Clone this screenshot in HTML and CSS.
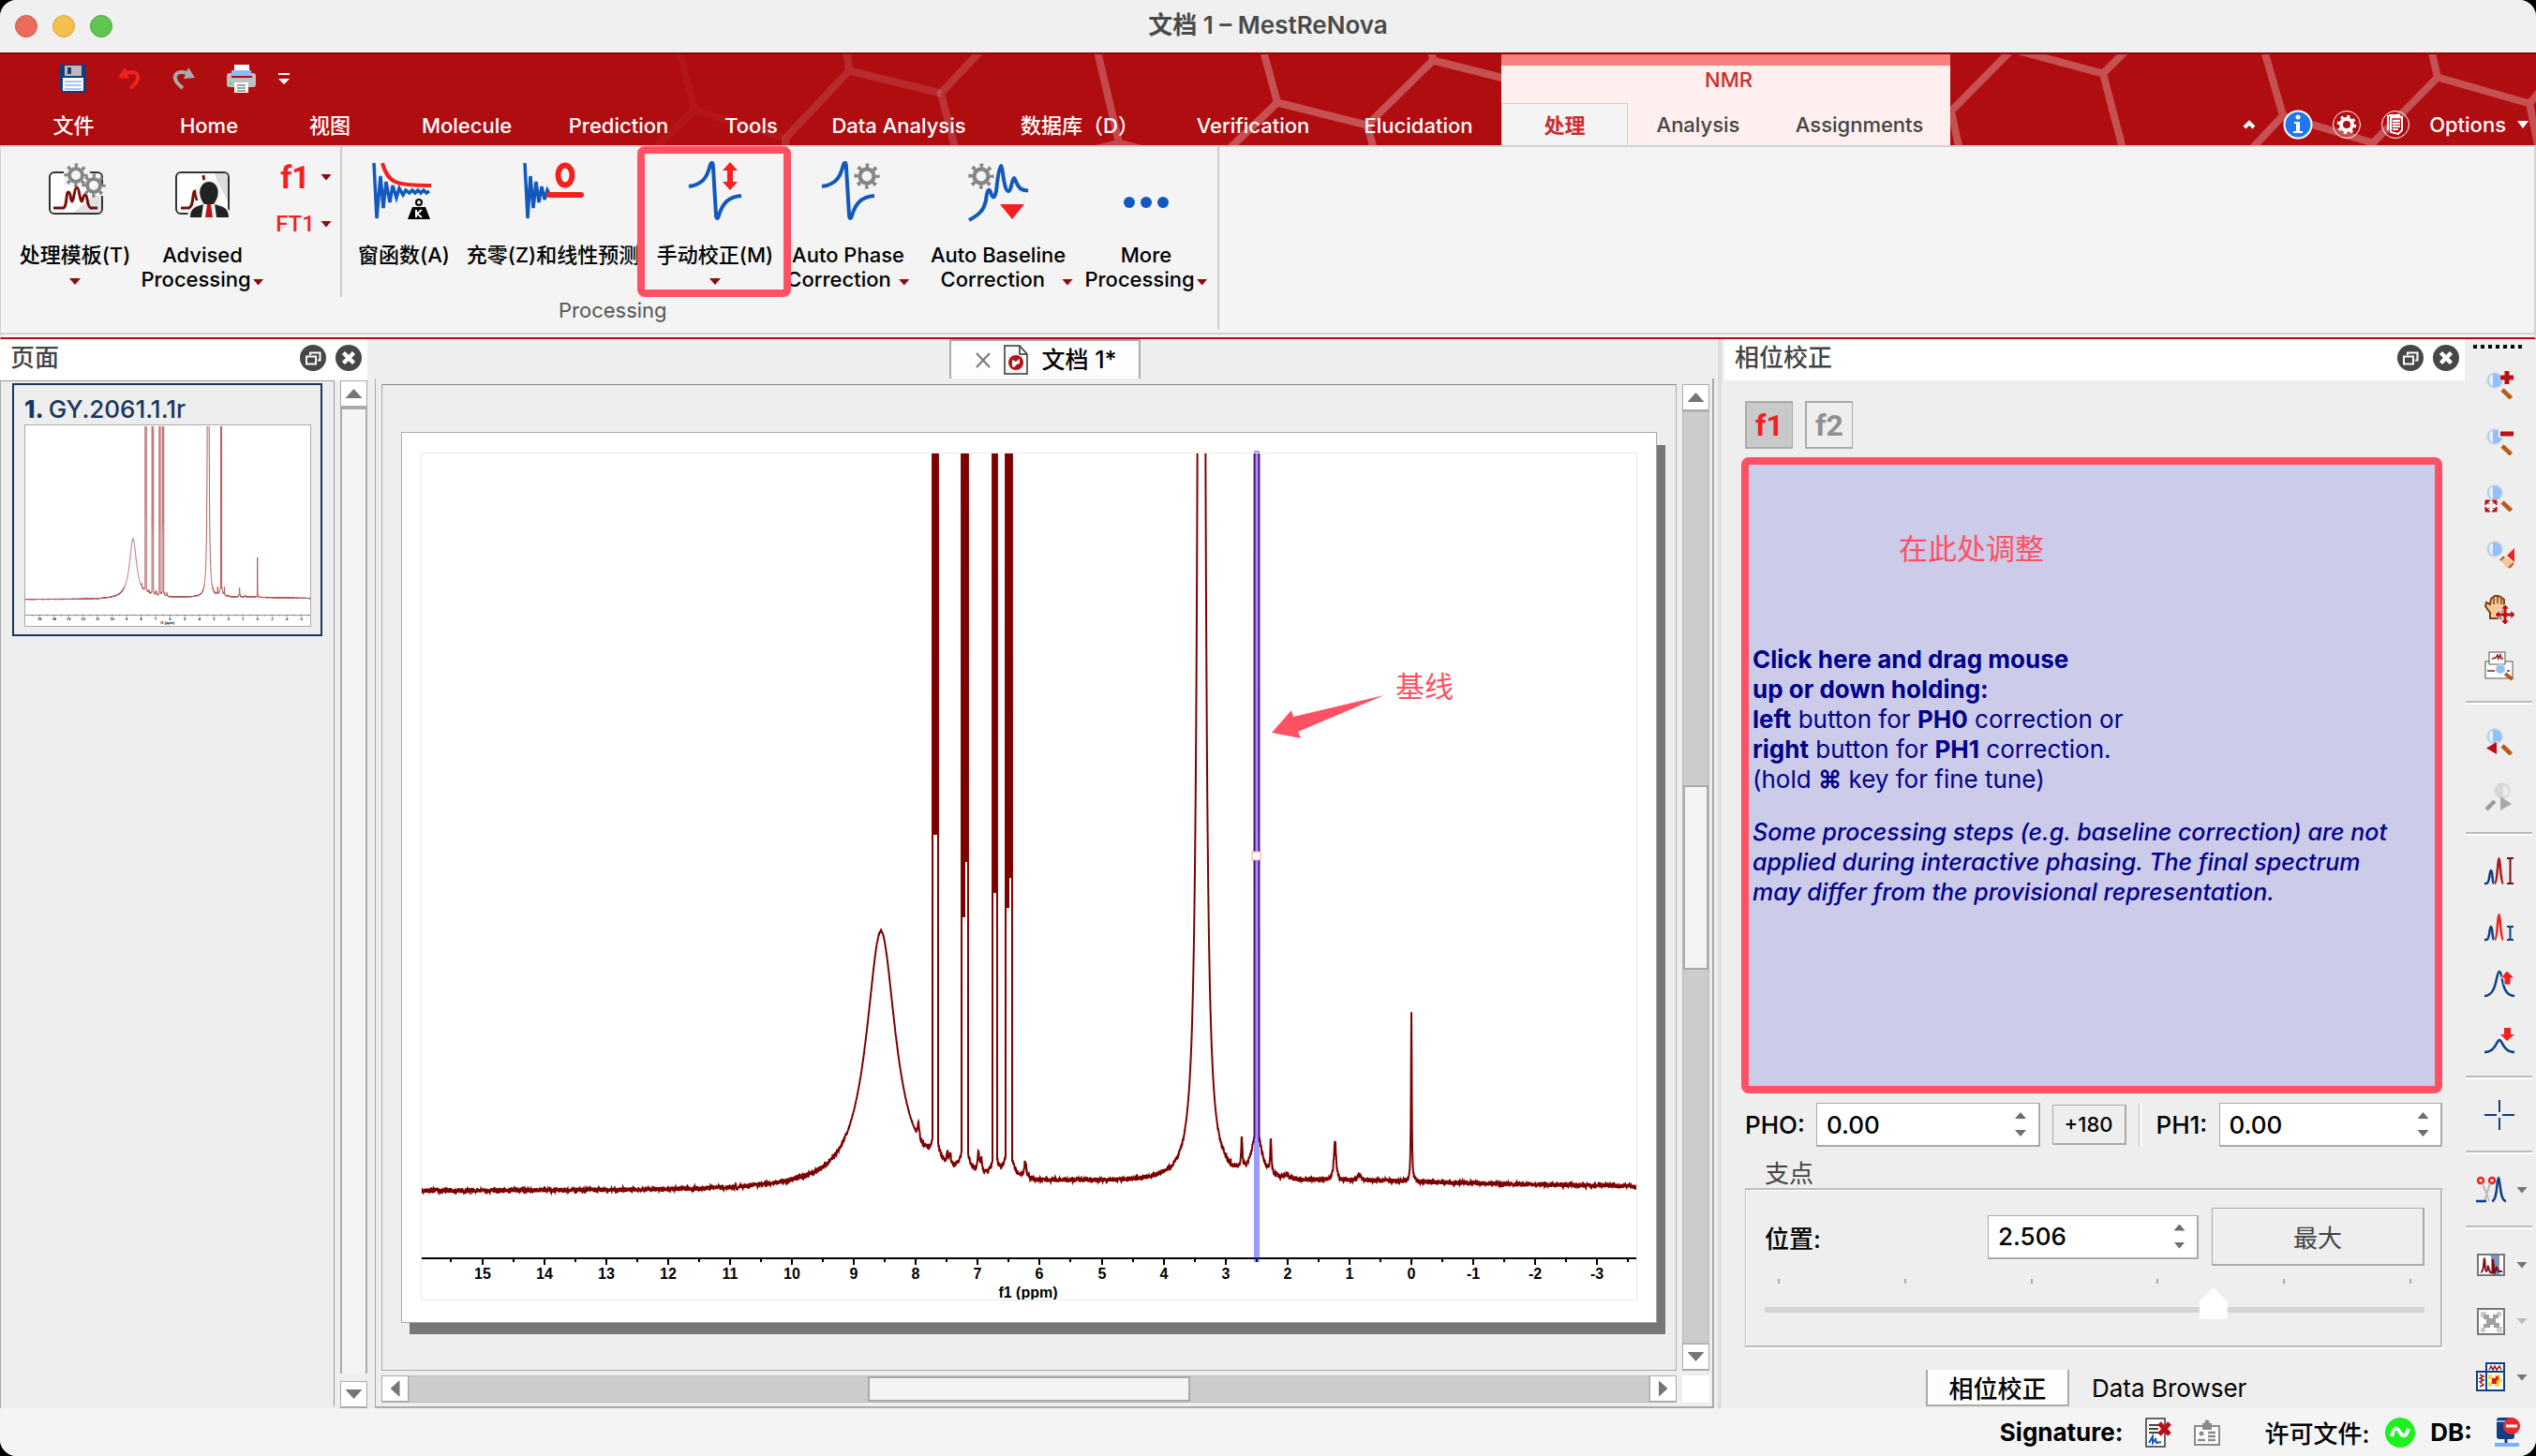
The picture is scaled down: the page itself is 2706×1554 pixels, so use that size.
FILE: index.html
```html
<!DOCTYPE html>
<html lang="zh-CN">
<head>
<meta charset="utf-8">
<title>文档 1 – MestReNova</title>
<link rel="stylesheet" href="styles.css">
</head>
<body>
<svg class="defs" aria-hidden="true">
  <symbol id="gear" viewBox="-13 -13 26 26"><circle r="7" fill="none" stroke="#858585" stroke-width="4"/><circle r="10.6" fill="none" stroke="#858585" stroke-width="4" stroke-dasharray="3.3 5.03" stroke-dashoffset="1.6"/></symbol>
  <symbol id="lens" viewBox="0 0 32 32"><circle cx="11" cy="12" r="9" fill="#d9dce0"/><circle cx="11" cy="12" r="7.6" fill="#93c0fb"/><path d="M9 5.5a7 7 0 0 0 0 13z" fill="#e6f0ff"/><path d="M19 22l9.5 9" stroke="#b85c14" stroke-width="4.5"/></symbol>
  <symbol id="phase" viewBox="0 0 64 64"><path d="M4 27C18 25 23 18 26 7c2-8 4-6 4 0l3 50c0 5 2 5 3 1C40 45 46 38 60 37" fill="none" stroke="#1259bd" stroke-width="4"/></symbol>
  <symbol id="restore" viewBox="0 0 28 28"><circle cx="14" cy="14" r="14" fill="#474747"/><path d="M11 11V8.500h10.500v8H19" fill="none" stroke="#fff" stroke-width="2"/><rect x="7" y="12.500" width="10" height="8" fill="#474747" stroke="#fff" stroke-width="2"/></symbol>
  <symbol id="close" viewBox="0 0 28 28"><circle cx="14" cy="14" r="14" fill="#474747"/><path d="M8.500 8.500l11 11M19.500 8.500l-11 11" stroke="#fff" stroke-width="4.500"/></symbol>
</svg>

<div class="titlebar">
  <div class="lights"><button class="light red" aria-label="Close"></button><button class="light yellow" aria-label="Minimize"></button><button class="light green" aria-label="Zoom"></button></div>
  <h1>文档 1 – MestReNova</h1>
</div>

<header class="header">
  <svg class="hex" viewBox="0 57 2706 98" preserveAspectRatio="xMaxYMid slice" aria-hidden="true">
    <g fill="none" stroke="#fff" stroke-width="8">
      <path opacity=".04" d="M726 57l15 60-40 38M741 117l97 30"/>
      <path opacity=".12" d="M903 50l3 25-68 72v14M906 75l98 24"/>
      <path opacity=".16" d="M1050 50l-46 49 16 62"/>
      <path opacity=".25" d="M1170 50l24 102-30 8M1194 152l30 8"/>
      <path opacity=".28" d="M1347 50l16 59-52 50M1363 109l96 24 8 30M1459 133l70-69-2-12M1529 64l80 20"/>
      <path opacity=".28" d="M2149 50l-67 68M2147 52l97 26 26-26M2244 78l22 84M2082 118l9 42M2415 50l21 73-34 36M2436 123l96 29 69-70-7-30M2601 82l98 28 12-14M2699 110l9 44M2532 152l1 8"/>
    </g>
  </svg>
  <div class="header-left">
    <div class="quick">
      <button aria-label="Save"><svg width="28" height="30"><path d="M0 0h28v30H4l-4-4z" fill="#0f3f7e"/><rect x="5" y="1" width="18" height="11" fill="#bbb"/><rect x="8" y="3" width="4" height="7" fill="#0f3f7e"/><rect x="3" y="14" width="22" height="14" fill="#fff"/><path d="M5 18h18M5 22h18M5 26h18" stroke="#8fb8ec" stroke-width="1.500"/></svg></button>
      <button aria-label="Undo"><svg width="24" height="24"><path d="M13 22C28 10 20 2 8 6" fill="none" stroke="#f3201f" stroke-width="4"/><path d="M0 11L7 0l5 12z" fill="#f3201f"/></svg></button>
      <button aria-label="Redo"><svg width="24" height="24"><path d="M11 22C-4 10 4 2 16 6" fill="none" stroke="#a9a9a9" stroke-width="4"/><path d="M24 11L17 0l-5 12z" fill="#a9a9a9"/></svg></button>
      <button aria-label="Print"><svg width="32" height="30"><rect x="8" y="0" width="16" height="8" fill="#fff"/><rect x="0" y="9" width="31" height="15" rx="3" fill="#bfbfbf"/><path d="M5 6h21v7H5z" fill="#90bdfa"/><path d="M5 13h22" stroke="#b00d10" stroke-width="2"/><rect x="8" y="19" width="15" height="11" fill="#fff"/><path d="M11 22h9M11 25h9M11 28h9" stroke="#444"/><circle cx="4" cy="20" r="1.500" fill="#3f3"/></svg></button>
      <button aria-label="Customize"><svg width="12" height="12"><path d="M0 1h12" stroke="#fff" stroke-width="2"/><path d="M0 6h12l-6 6z" fill="#fff"/></svg></button>
    </div>
    <nav class="tabs">
      <a href="#">文件</a><a href="#">Home</a><a href="#">视图</a><a href="#">Molecule</a><a href="#">Prediction</a><a href="#">Tools</a><a href="#">Data Analysis</a><a href="#">数据库（D）</a><a href="#">Verification</a><a href="#">Elucidation</a>
    </nav>
  </div>
  <div class="context">
    <div class="context-title">NMR</div>
    <nav class="context-tabs"><a href="#" class="active">处理</a><a href="#">Analysis</a><a href="#">Assignments</a></nav>
  </div>
  <div class="header-right">
    <button class="collapse" aria-label="Collapse"><svg width="14" height="10"><path d="M2 8l5-5 5 5" fill="none" stroke="#fff" stroke-width="4"/></svg></button>
    <button aria-label="Information"><svg width="32" height="32"><circle cx="16" cy="16" r="14.500" fill="#2077f0" stroke="#fff" stroke-width="2"/><circle cx="16" cy="8" r="2.500" fill="#fff"/><path d="M12 13h6v10h3v2H11v-2h3v-8h-2z" fill="#fff"/></svg></button>
    <button aria-label="Settings"><svg width="32" height="32"><circle cx="16" cy="16" r="14.500" fill="none" stroke="#fff"/><g fill="none" stroke="#fff"><circle cx="16" cy="16" r="6" stroke-width="4"/><circle cx="16" cy="16" r="8.500" stroke-width="3.500" stroke-dasharray="3 3.675"/></g></svg></button>
    <button aria-label="Report"><svg width="32" height="32"><circle cx="16" cy="16" r="14.500" fill="none" stroke="#fff"/><path d="M11 8h12v14l-4 4-8-2zM9 6h12M8 6v16" fill="none" stroke="#fff" stroke-width="2"/><path d="M13 12h8M13 15h8M13 18h8M13 21h6" stroke="#fff" stroke-width="2"/></svg></button>
    <button class="options">Options <svg width="12" height="8"><path d="M0 0h12l-6 8z" fill="#fff"/></svg></button>
  </div>
</header>

<section class="ribbon">
  <div class="group">
    <button class="rb w1"><svg width="64" height="64"><rect x="5" y="12" width="56" height="44" rx="5" fill="#fff" stroke="#333" stroke-width="2"/><path d="M60 30v20q0 5-5 5H30z" fill="#e2e2e2"/><path d="M20 8h28v18h16v11H50L44 27H20z" fill="#f4f4f4"/><path d="M9 50h10c5 0 3-17 6-17s2 10 4 10 2-15 5-15 3 15 5 15 1-7 4-7 1 12 6 14h7" fill="none" stroke="#7b0d0d" stroke-width="3"/><use href="#gear" x="20" y="2" width="26" height="26"/><use href="#gear" x="39" y="13" width="26" height="26"/></svg><span>处理模板(T)</span><i class="caret"></i></button>
    <button class="rb w2"><svg width="64" height="64"><rect x="4" y="12" width="56" height="44" rx="5" fill="#fff" stroke="#333" stroke-width="2"/><path d="M45 13h10q4 0 4 5v25L47 20z" fill="#ddd"/><path d="M9 50h8c6 0 4-18 7-18l2 10M33 15l1 8" fill="none" stroke="#7b0d0d" stroke-width="3"/><path d="M16 62c0-12 5-14 14-17-9-12-4-26 9-26s18 14 9 26c10 3 14 5 14 17z" fill="#f5f5f5"/><path d="M19 60c0-10 6-12 15-14-9-12-4-24 5-24s14 12 5 24c10 2 16 4 16 14z" fill="#222"/><path d="M33 46l-2 14h16l-2-14z" fill="#fff"/><path d="M37 46h4l2 14h-8z" fill="#c21118"/></svg><span>Advised</span><span class="line2"><b>Processing</b><i class="caret"></i></span></button>
    <div class="fcol"><button><b class="f1">f1</b><i class="caret"></i></button><button><b class="ft">FT1</b><i class="caret"></i></button></div>
  </div>
  <div class="group processing">
    <div class="row">
      <button class="rb w3"><svg width="64" height="64"><path d="M0 2L3 61 7 16l3 34 3-28 4 22 3-18 4 13 3-10 4 7 3-5 4 3 3-3 3 3 3-3 3 3 3-3 3 3 3-2" fill="none" stroke="#1259bd" stroke-width="3.500"/><path d="M9 2C15 24 24 26 61 26" fill="none" stroke="#f3201f" stroke-width="4"/><circle cx="48" cy="44" r="3" fill="none" stroke="#000" stroke-width="2"/><path d="M41 49h14l5 13H36z"/><path d="M45 52v8M51 52l-5 4 5 4" fill="none" stroke="#fff" stroke-width="2"/></svg><span>窗函数(A)</span></button>
      <button class="rb w4"><svg width="64" height="64"><path d="M2 2l3 59L8 16l3 34 3-28 3 22 3-17 3 14 3-10 3 6" fill="none" stroke="#1259bd" stroke-width="3.500"/><path d="M28 36h34" stroke="#f3201f" stroke-width="6" stroke-linecap="round"/><ellipse cx="45" cy="15" rx="7.500" ry="10.500" fill="none" stroke="#f3201f" stroke-width="6"/></svg><span>充零(Z)和线性预测</span></button>
      <button class="rb w5 marked"><svg width="64" height="64"><use href="#phase"/><path d="M48 1l8 9h-5v12h5l-8 9-8-9h5V10h-5z" fill="#f3201f"/></svg><span>手动校正(M)</span><i class="caret"></i></button>
      <button class="rb w6"><svg width="64" height="64"><use href="#phase"/><use href="#gear" x="38" y="2" width="28" height="28"/></svg><span>Auto Phase</span><span class="line2 wide"><b>Correction</b><i class="caret"></i></span></button>
      <button class="rb w7"><svg width="64" height="64"><use href="#gear" x="0" y="2" width="28" height="28"/><path d="M1 63C12 57 17 52 19 42c1-10 3-14 5-9 2 7 4 8 6-1 1-10 3-27 5-27s3 27 8 27c3 0 4-14 6-14s3 15 15 13" fill="none" stroke="#1259bd" stroke-width="4"/><path d="M34 46h26L47 62z" fill="#f3201f"/></svg><span>Auto Baseline</span><span class="line2 end"><b>Correction</b><i class="caret"></i></span></button>
      <button class="rb w8"><svg width="64" height="64" fill="#1259bd"><circle cx="14" cy="44" r="6"/><circle cx="32" cy="44" r="6"/><circle cx="50" cy="44" r="6"/></svg><span>More</span><span class="line2"><b>Processing</b><i class="caret"></i></span></button>
    </div>
    <div class="group-name">Processing</div>
  </div>
</section>

<main class="main">
  <aside class="pages">
    <div class="panel-head"><h2>页面</h2><button aria-label="Float"><svg width="28" height="28"><use href="#restore"/></svg></button><button aria-label="Close"><svg width="28" height="28"><use href="#close"/></svg></button></div>
    <div class="pages-body">
      <div class="pages-list">
        <figure class="thumb"><figcaption><strong>1.</strong><span>GY.2061.1.1r</span></figcaption><svg class="thumb-plot" viewBox="0 0 1296 903"><use href="#spectrum"/></svg></figure>
      </div>
      <div class="vscroll full"><button class="up" aria-label="Scroll up"></button><div class="track"></div><button class="down" aria-label="Scroll down"></button></div>
    </div>
  </aside>

  <section class="document">
    <div class="doc-tabs"><button class="doc-tab"><svg width="16" height="18"><path d="M1 2l14 15M15 2L1 17" stroke="#777" stroke-width="2"/></svg><svg width="26" height="32"><path d="M1 1h16l8 9v21H1z" fill="#f8f8f8" stroke="#333" stroke-width="1.500"/><path d="M17 1v9h8" fill="none" stroke="#333" stroke-width="1.500"/><circle cx="13" cy="19" r="8" fill="#b51218"/><path d="M9 23v-7l4 2 4-3v5l-3 1-3 3z" fill="#fff"/></svg><span>文档 1*</span></button></div>
    <div class="doc-frame">
      <div class="canvas">
        <div class="page">
          <svg class="plot" viewBox="0 0 1296 903" role="img" aria-label="NMR spectrum">
            <g id="spectrum">
              <clipPath id="area"><rect width="1296" height="903"/></clipPath>
              <path id="trace" class="trace" clip-path="url(#area)"/>
              <g class="core"><rect x="545" width="6" height="407"/><rect x="576" width="7" height="436"/><rect x="576" width="4" height="495"/><rect x="609" width="5" height="469"/><rect x="623" width="7" height="453"/><rect x="623" width="4" height="485"/></g>
              <path d="M0 859h1296" stroke="#000" stroke-width="2"/>
              <g id="ticks" class="ticks"></g>
              <text class="axis" x="647" y="901">f1 (ppm)</text>
            </g>
            <rect x="888" y="-3" width="6" height="866" fill="#2020ff" fill-opacity=".45"/>
            <rect x="886" y="425" width="9" height="9" fill="#fff" stroke="#ff9c9c"/>
            <path d="M907 298l21-24 2 7 97-23-92 39 3 7z" fill="#ff5163"/>
            <text class="note" x="1039" y="260">基线</text>
          </svg>
        </div>
      </div>
      <div class="vscroll"><button class="up" aria-label="Scroll up"></button><div class="track"><div class="space"></div><div class="handle"></div><div class="space"></div></div><button class="down" aria-label="Scroll down"></button></div>
      <div class="hscroll"><button class="left" aria-label="Scroll left"></button><div class="track"><div class="space"></div><div class="handle"></div><div class="space"></div></div><button class="right" aria-label="Scroll right"></button></div>
      <div class="corner"></div>
    </div>
  </section>

  <aside class="phase-panel">
    <div class="panel-head"><h2>相位校正</h2><button aria-label="Float"><svg width="28" height="28"><use href="#restore"/></svg></button><button aria-label="Close"><svg width="28" height="28"><use href="#close"/></svg></button></div>
    <div class="phase-body">
      <div class="dims"><button class="on">f1</button><button>f2</button></div>
      <div class="pad">
        <span class="pad-note">在此处调整</span>
        <p><strong>Click here and drag mouse<br>up or down holding:</strong><br><strong>left</strong> button for <strong>PH0</strong> correction or<br><strong>right</strong> button for <strong>PH1</strong> correction.<br>(hold <strong>⌘</strong> key for fine tune)</p>
        <p><em>Some processing steps (e.g. baseline correction) are not<br>applied during interactive phasing. The final spectrum<br>may differ from the provisional representation.</em></p>
      </div>
      <div class="angles">
        <label for="ph0">PHO:</label><div class="spin"><input id="ph0" value="0.00"><span><button aria-label="Increase"></button><button aria-label="Decrease"></button></span></div>
        <button class="plus">+180</button><i class="rule"></i>
        <label for="ph1">PH1:</label><div class="spin"><input id="ph1" value="0.00"><span><button aria-label="Increase"></button><button aria-label="Decrease"></button></span></div>
      </div>
      <fieldset>
        <legend>支点</legend>
        <div class="pivot">
          <div class="pivot-row"><label for="pos">位置:</label><div class="spin"><input id="pos" value="2.506"><span><button aria-label="Increase"></button><button aria-label="Decrease"></button></span></div><button class="max">最大</button></div>
          <div class="scale"><i></i><i></i><i></i><i></i><i></i><i></i></div>
          <input type="range" min="0" max="1000" value="688" aria-label="位置">
        </div>
      </fieldset>
      <div class="dock-tabs"><button class="on">相位校正</button><button>Data Browser</button></div>
    </div>
  </aside>

  <nav class="tools">
    <div class="grip"></div>
    <button aria-label="Zoom in"><svg width="32" height="32"><use href="#lens"/><path d="M24 1v15M16.500 8.500h15" stroke="#eee" stroke-width="8"/><path d="M24 2v14M17 9h14" stroke="#bb1015" stroke-width="5"/></svg></button>
    <button aria-label="Zoom out"><svg width="32" height="32"><use href="#lens"/><path d="M15 9h17" stroke="#eee" stroke-width="8"/><path d="M17 9h14" stroke="#bb1015" stroke-width="5"/></svg></button>
    <button aria-label="Full view"><svg width="32" height="32"><use href="#lens"/><path d="M0 19h14v13H0z" fill="#eee"/><path d="M1 25v-5h5zM8 20h5v5zM1 27v5h5zM8 32h5v-5zM2 21l3 3M12 21l-3 3M2 31l3-3M12 31l-3-3" fill="#bb1015" stroke="#bb1015"/></svg></button>
    <button aria-label="Manual zoom"><svg width="32" height="32"><use href="#lens"/><path d="M17 24l4-4 10 6-1 6h-6z" fill="#f8c69b"/><path d="M17 24l4-4M26 32l5-5" stroke="#b85c14" stroke-width="2"/><path d="M32 11v15l-8-7z" fill="#f3201f"/></svg></button>
    <button aria-label="Pan"><svg width="32" height="32"><path d="M6 26V20L1 13l1-4 4 2 1-6 4-3 3 0 3 1 4 3v8l-4 12z" fill="#fbc795" stroke="#7a4310" stroke-width="2"/><path d="M10 4v7M14 3v7M18 5v6" stroke="#7a4310" stroke-width="1.500"/><path d="M22 11l5 5h-3v4h4v-3l5 5-5 5v-3h-4v4h3l-5 5-5-5h3v-4h-4v3l-5-5 5-5v3h4v-4h-3z" fill="#bb1015" stroke="#eee"/></svg></button>
    <button aria-label="Page view"><svg width="32" height="32"><rect x="1" y="12" width="29" height="18" fill="#fff" stroke="#555"/><rect x="5" y="2" width="17" height="13" fill="#fff" stroke="#555"/><path d="M8 9l4-1 2-3 1 4 2-4 1 4h2M3 22h8M24 22h3" fill="none" stroke="#8a1a1a" stroke-width="1.500"/><circle cx="17" cy="20" r="5" fill="#93c0fb" stroke="#ddd"/><path d="M22 25l8 6" stroke="#b85c14" stroke-width="4"/></svg></button>
    <hr>
    <button aria-label="Previous zoom"><svg width="32" height="32"><use href="#lens"/><path d="M14 16v16H0z" fill="#eee"/><path d="M13 18v13l-11-6.500z" fill="#bb1015"/></svg></button>
    <button aria-label="Next zoom" disabled><svg width="32" height="32"><circle cx="19" cy="10" r="8.500" fill="#d6d6d6"/><path d="M20 4a6 6 0 0 1 0 12z" fill="#ececec"/><path d="M2 30l9-9" stroke="#9c9c9c" stroke-width="4.500"/><path d="M17 16v15l12-7z" fill="#a8a8a8"/></svg></button>
    <hr>
    <button aria-label="Increase intensity"><svg width="32" height="32"><path d="M0 29h2c4 0 3-14 5-14s1 13 3 14" fill="none" stroke="#0d3f84" stroke-width="2.500"/><path d="M11 29c3-1 3-27 4.500-27s1.500 26 4.500 27" fill="none" stroke="#b51218" stroke-width="2.500"/><path d="M24 2h7M27.500 2v27M24 29h7" stroke="#7d0d12" stroke-width="2"/></svg></button>
    <button aria-label="Fit highest"><svg width="32" height="32"><path d="M0 29h2c4 0 3-14 5-14s1 13 3 14" fill="none" stroke="#0d3f84" stroke-width="2.500"/><path d="M11 29c3-1 3-27 4.500-27s1.500 26 4.500 27" fill="none" stroke="#f3201f" stroke-width="2.500"/><path d="M24 15h7M27.500 15v14M24 29h7" stroke="#0d3f84" stroke-width="2"/></svg></button>
    <button aria-label="Scale up"><svg width="32" height="32"><path d="M0 29c14 0 12-26 16-26s1 26 16 26" fill="none" stroke="#0d3f84" stroke-width="2.500"/><path d="M24 2l8 8h-4v7h-7v-7h-4z" fill="#f3201f" stroke="#eee"/></svg></button>
    <button aria-label="Scale down"><svg width="32" height="32"><path d="M0 29c12 0 13-13 16-13s4 13 16 13" fill="none" stroke="#0d3f84" stroke-width="2.500"/><path d="M24 17l-7-7h4V3h7v7h4z" fill="#f3201f"/></svg></button>
    <hr>
    <button aria-label="Crosshair"><svg width="32" height="32"><path d="M16 0v13M16 19v13M0 16h13M19 16h13" stroke="#0d3f84" stroke-width="2"/></svg></button>
    <hr>
    <button class="drop" aria-label="Cut"><svg width="32" height="32"><g fill="none"><circle cx="5" cy="6" r="3" stroke="#f3201f" stroke-width="2.500"/><circle cx="17" cy="6" r="3" stroke="#f3201f" stroke-width="2.500"/><path d="M7 9l7 19M15 9L9 28" stroke="#bbb" stroke-width="2"/><path d="M0 28h11M17 28c6 0 5-25 7-25s1 25 8 25" stroke="#0d3f84" stroke-width="2.500"/></g></svg><i></i></button>
    <hr>
    <button class="drop" aria-label="Region"><svg width="32" height="32"><rect x="2" y="5" width="28" height="22" fill="#fff" stroke="#777" stroke-width="2"/><path d="M16 6h9v20h-9z" fill="#7b95c4"/><path d="M5 24c4 0 3-15 4-15s0 14 2 14 1-8 2-5l2 6h3V10l2 14 2-5 2 4h4" fill="none" stroke="#7d0d12" stroke-width="2"/></svg><i></i></button>
    <button class="drop" aria-label="Matrix" disabled><svg width="32" height="32"><rect x="2" y="3" width="28" height="27" fill="#fff" stroke="#777" stroke-width="2"/><path d="M5 6h6v6H5zM22 6h5v5h-5zM5 23h5v5H5zM22 22h6v6h-6z" fill="#ccc"/><path d="M8 9h6v4h4V9h6v4h-3v5h4v5h-6v-3h-4v3H8v-4h3v-5H8z" fill="#a0a0a0"/></svg><i></i></button>
    <button class="drop" aria-label="2D layout"><svg width="32" height="32"><rect x="11" y="1" width="19" height="9" fill="#fff" stroke="#0d3f84" stroke-width="2"/><rect x="1" y="10" width="10" height="20" fill="#fff" stroke="#0d3f84" stroke-width="2"/><rect x="11" y="10" width="19" height="20" fill="#fff" stroke="#0d3f84" stroke-width="2"/><path d="M14 8l2-4 2 4 2-4 2 4 3-4 2 4M4 13l4 2-4 2 4 2-4 2 4 3-4 2" fill="none" stroke="#8a1a1a" stroke-width="1.500"/><path d="M13 13h4v3h3v-3h6v5h2v3h-3v5h-5v-3h-3v3h-4v-5h3v-3h-3z" fill="#ffd92e"/><path d="M17 17h4v-2h3v4h-2v4h-5z" fill="#e8171c"/></svg><i></i></button>
  </nav>
</main>

<footer class="status">
  <strong>Signature:</strong>
  <svg width="28" height="32"><path d="M1 1h20v30H1z" fill="#fff" stroke="#333" stroke-width="1.500"/><path d="M4 8h10M4 12h10M4 16h10" stroke="#444" stroke-width="2"/><path d="M4 27l4-7v7l3-4 1 4 5-1" fill="none" stroke="#1259bd" stroke-width="2"/><path d="M15 6l11 12M26 6L15 18" stroke="#bb1015" stroke-width="5"/></svg>
  <svg class="badge" width="28" height="28"><rect x="1" y="7" width="26" height="20" fill="#fff" stroke="#8a8a8a" stroke-width="2"/><rect x="9" y="4" width="10" height="7" fill="#8a8a8a"/><circle cx="14" cy="3" r="2.500" fill="#8a8a8a"/><circle cx="8" cy="15" r="2.500" fill="#8a8a8a"/><path d="M4 22h8M15 14h8M15 18h8M15 22h8" stroke="#8a8a8a" stroke-width="2.500"/></svg>
  <span class="licence">许可文件:</span>
  <svg width="32" height="32"><circle cx="16" cy="16" r="16" fill="#1ff01f"/><path d="M7 20c3-12 6-9 9-4s6 5 9-4" fill="none" stroke="#fff" stroke-width="4"/></svg>
  <strong>DB:</strong>
  <svg width="28" height="34"><rect x="2" y="1" width="19" height="23" rx="3" fill="#0d3f84"/><path d="M2 5h12" stroke="#8fb8ec" stroke-width="2"/><path d="M12 24v7" stroke="#0d3f84" stroke-width="3"/><path d="M0 30h26" stroke="#7aaef5" stroke-width="4"/><circle cx="18" cy="10" r="9" fill="#f0272b"/><path d="M12 10h12" stroke="#fff" stroke-width="3"/></svg>
</footer>
<script src="spectrum.js"></script>
</body>
</html>
```
FILE: styles.css
```css
* { box-sizing: border-box; }
html { background: #000; }
body {
  margin: 0;
  min-height: 100vh;
  display: flex;
  flex-direction: column;
  font-family: Inter, "Noto Sans CJK SC", sans-serif;
  font-size: 26px;
  color: #000;
  background: #f4f4f4;
  border-radius: 18px;
  overflow: hidden;
}
button {
  font: inherit;
  color: inherit;
  background: none;
  border: 0;
  padding: 0;
  display: flex;
  align-items: center;
  justify-content: center;
}
a { color: inherit; text-decoration: none; }
svg { display: block; flex: none; overflow: visible; }
h1, h2, p, figure, fieldset { margin: 0; padding: 0; border: 0; }
.defs { position: absolute; width: 0; height: 0; }

/* title bar */
.titlebar {
  height: 56px;
  display: grid;
  grid-template-columns: 1fr auto 1fr;
  align-items: center;
  background: #f0f0f0;
}
.titlebar h1 { font-size: 26px; line-height: 32px; padding-bottom: 2px; font-weight: 600; color: #4a4a4a; }
.lights { display: flex; gap: 16px; padding-left: 16px; }
.light { width: 24px; height: 24px; border-radius: 50%; }
.light.red { background: #ed6a5e; border: 1px solid #d5564b; }
.light.yellow { background: #f5bf4f; border: 1px solid #dba53a; }
.light.green { background: #61c554; border: 1px solid #4fa73f; }

/* red header */
.header {
  position: relative;
  display: flex;
  height: 99px;
  background: #b00d10;
  border-top: 2px solid #8f0000;
  color: #fff;
  font-size: 22px;
  font-weight: 500;
}
.hex { position: absolute; inset: 0; width: 100%; height: 100%; overflow: hidden; }
.header-left, .context, .header-right { position: relative; }
.quick { display: flex; align-items: center; height: 52px; padding-left: 64px; gap: 34px; }
.quick button:last-child { margin-left: -11px; }
.tabs {
  display: grid;
  grid-template-columns: 157px 132px 126px 166px 158px 125px 190px 196px 174px 179px;
  height: 45px;
  line-height: 48px;
  text-align: center;
  white-space: nowrap;
}
.context { width: 479px; background: #ffefef; border-top: 12px solid #fa8080; margin-left: -1px; color: #444; }
.context-title { height: 40px; line-height: 30px; text-align: center; padding-left: 6px; color: #cb2d2d; }
.context-tabs { display: grid; grid-template-columns: 135px 150px 194px; height: 47px; line-height: 46px; text-align: center; }
.context-tabs .active { color: #cb2d2d; background: #f4f4f4; border: 1px solid #ccc; border-bottom: 0; font-weight: 700; }
.header-right { flex: 1; display: flex; align-items: center; justify-content: flex-end; gap: 20px; padding: 53px 8px 0 0; }
.collapse { margin-right: 9px; }
.options { gap: 12px; }

/* ribbon */
.ribbon {
  height: 207px;
  display: flex;
  border: 2px solid #d2d2d2;
  border-bottom: 2px solid #b00d10;
  border-left-width: 1px;
  background: #f4f4f4;
  font-size: 22px;
  font-weight: 500;
  position: relative;
}
.group { display: flex; align-items: flex-start; padding: 15px 0 0 13px; }
.group:first-child { width: 364px; height: 160px; border-right: 2px solid #ccc; }
.ribbon::after { content: ""; position: absolute; left: 0; right: 0; bottom: 3px; border-bottom: 2px solid #d2d2d2; }
.processing { display: block; width: 936px; padding-left: 0; border-right: 2px solid #ccc; margin-bottom: 8px; }
.row { display: flex; }
.rb { display: flex; flex-direction: column; height: 139px; justify-content: flex-start; line-height: 26px; white-space: nowrap; font-weight: 500; }
.rb svg { margin-bottom: 23px; }
.rb > .caret { margin-top: 12px; }
.w1 { width: 132px; }
.w2 { width: 140px; }
.w3 { width: 132px; }
.w4 { width: 186px; }
.w5 { width: 160px; }
.w6 { width: 124px; }
.w7 { width: 160px; margin-left: 18px; }
.w8 { width: 136px; margin-left: 10px; }
.line2 { display: flex; width: 100%; justify-content: center; align-items: center; gap: 2px; }
.line2 b { font-weight: 500; }
.line2.wide { gap: 8px; }
.line2.end { justify-content: flex-end; gap: 18px; }
.line2 .caret { margin-top: 6px; }
.caret { flex: none; width: 12px; height: 7px; background: #8a0c10; clip-path: polygon(0 0, 100% 0, 50% 100%); }
.marked { position: relative; }
.marked::after { content: ""; position: absolute; inset: -16px -1px -6px -3px; border: 8px solid #ff5163; border-radius: 8px; }
.fcol { display: flex; flex-direction: column; gap: 18px; padding-top: 1px; }
.fcol button { margin-left: 8px; width: 60px; height: 32px; justify-content: space-between; }
.fcol b { width: 42px; color: #f3201f; font: 700 34px/32px Roboto, sans-serif; text-align: center; }
.fcol .ft { font-weight: 500; font-size: 24px; }
.group-name { margin-top: 6px; padding-left: 231px; line-height: 28px; color: #555; font-weight: 400; }

/* main area */
.main { flex: 1; display: flex; background: #eee; }
.panel-head { display: flex; align-items: center; height: 44px; gap: 10px; background: #fff; padding: 0 6px 4px 11px; }
.panel-head h2 { flex: 1; font-size: 26px; line-height: 36px; font-weight: 500; color: #444; }
.pages { width: 392px; display: flex; flex-direction: column; }
.pages-body { flex: 1; display: flex; gap: 6px; border-left: 1px solid #aaa; }
.pages-list { width: 356px; border: 1px solid #999; border-width: 1px 1px 0 0; padding: 2px 12px; margin-bottom: 2px; }
.thumb { border: 2px solid #1a355e; padding: 9px 10px 8px 11px; height: 270px; display: flex; flex-direction: column; }
.thumb figcaption { display: flex; gap: 5px; font-size: 26px; line-height: 34px; height: 33px; font-weight: 500; color: #1a355e; white-space: nowrap; }
.thumb figcaption strong { font-weight: 800; }
.thumb-plot { width: 100%; height: 216px; background: #fff; border: 1px solid #aaa; --trace: #b05a5a; --trace-width: 1px; --core: .25; }

.vscroll { width: 29px; display: flex; flex-direction: column; }
.hscroll { height: 29px; display: flex; }
.vscroll button, .hscroll button { width: 29px; height: 29px; background: #fff; border: 1px solid #aaa; border-bottom-width: 2px; }
.vscroll button::after, .hscroll button::after { content: ""; width: 18px; height: 10px; background: #757575; clip-path: polygon(50% 0, 100% 100%, 0 100%); }
.vscroll .down::after { clip-path: polygon(0 0, 100% 0, 50% 100%); }
.hscroll button::after { width: 10px; height: 18px; clip-path: polygon(0 50%, 100% 0, 100% 100%); }
.hscroll .right::after { clip-path: polygon(0 0, 100% 50%, 0 100%); }
.track { flex: 1; display: flex; background: #ccc; border: 1px solid #bbb; }
.vscroll .track { flex-direction: column; }
.full .track { background: #f4f4f4; border: 2px solid #aaa; border-bottom: 0; margin-bottom: 8px; }
.handle { flex: 343; background: #f4f4f4; border: 2px solid #aaa; }
.space { flex: 494; }
.vscroll .space { flex: 402; }
.vscroll .handle { flex: 195; }

.document { flex: 1; min-width: 0; display: flex; flex-direction: column; padding-left: 8px; }
.doc-tabs { height: 42px; display: flex; justify-content: center; }
.doc-tab { width: 204px; height: 42px; gap: 14px; padding-left: 4px; background: #fdfdfd; border: 2px solid #aaa; border-bottom: 0; font-weight: 500; font-size: 25px; line-height: 34px; white-space: nowrap; }
.doc-frame {
  flex: 1;
  display: grid;
  grid-template: minmax(0, 1fr) 29px / minmax(0, 1fr) 29px;
  gap: 5px 6px;
  padding: 6px 3px 4px 6px;
  border: 2px solid #aaa;
  border-width: 0 2px 2px 1px;
}
.canvas { border: 1px solid #aaa; border-top-color: #888; padding: 50px 20px; }
.page { height: 100%; background: #fff; border: 1px solid #aaa; padding: 22px 21px 24px; box-shadow: 9px 12px 0 #767676; clip-path: polygon(0 0, 100% 0, 100% 14px, calc(100% + 9px) 14px, calc(100% + 9px) calc(100% + 12px), 9px calc(100% + 12px), 9px 100%, 0 100%); }
.plot { width: 100%; height: 100%; outline: 1px solid #e8e8e8; --trace: #7d0000; --trace-width: 2px; --core: 1; }
.trace { fill: none; stroke: var(--trace); stroke-width: var(--trace-width); vector-effect: non-scaling-stroke; }
.core { fill: var(--trace); fill-opacity: var(--core); }
.ticks path { stroke: #000; stroke-width: 2px; }
.ticks text, .axis { font: 700 16px "Liberation Sans", sans-serif; text-anchor: middle; }
.note { font-size: 31px; fill: #ff5163; }
.corner { background: #fff; }

/* phase correction panel */
.phase-panel { width: 797px; display: flex; flex-direction: column; margin-left: 4px; border-left: 4px solid #ddd; padding-left: 3px; }
.phase-body { flex: 1; display: flex; flex-direction: column; padding: 22px 24px 0 18px; }
.dims { display: flex; gap: 13px; padding-left: 4px; }
.dims button { width: 51px; height: 51px; border: 2px solid #aaa; border-right-width: 1px; color: #8f8f8f; font: 700 32px Roboto, sans-serif; }
.dims .on { background: #c9c9c9; color: #f3201f; }
.pad { position: relative; flex: 1; margin-top: 9px; border: 8px solid #ff5163; border-radius: 8px; background: #cccbea; padding-left: 4px; display: flex; flex-direction: column; justify-content: center; gap: 24px; color: #00008b; line-height: 32px; white-space: nowrap; }
.pad em { font-size: 25px; font-weight: 500; }
.pad-note { position: absolute; left: 160px; top: 74px; font-size: 31px; color: #ff5163; }
.angles { display: flex; align-items: center; margin-top: 10px; padding-left: 4px; }
.angles label { width: 76px; font-weight: 500; white-space: nowrap; }
.angles label + .spin { flex: 1; }
.spin { display: flex; height: 47px; min-width: 0; background: #fff; border: 1px solid #aaa; border-width: 1px 2px 2px 1px; }
.spin input { flex: 1; min-width: 0; border: 0; padding: 0 0 0 10px; font: 500 26px Inter, sans-serif; background: none; outline: 0; }
.spin span { width: 37px; display: flex; flex-direction: column; justify-content: center; align-items: center; gap: 12px; }
.spin span button { width: 12px; height: 7px; background: #6d6d6d; clip-path: polygon(50% 0, 100% 100%, 0 100%); }
.spin span button:last-child { clip-path: polygon(0 0, 100% 0, 50% 100%); }
.plus { width: 79px; height: 43px; margin: 0 13px; border: 2px solid #aaa; border-width: 1px 2px 2px 1px; font-size: 22px; font-weight: 500; }
.rule { width: 3px; height: 47px; background: #fff; border-left: 1px solid #bbb; margin-right: 16px; }
.angles .rule + label { width: 67px; }
fieldset { margin: 14px 0 0 4px; min-width: 0; }
legend { margin-left: 21px; padding: 0; line-height: 30px; color: #444; }
.pivot { height: 170px; border: 2px solid #bbb; box-shadow: inset 1px 1px #fff, 1px 2px #fff; padding: 19px 17px 0 20px; border-left-width: 1px; }
.pivot-row { display: flex; align-items: center; gap: 14px; }
.pivot-row label { flex: 1; font-weight: 500; }
.pivot-row .spin { width: 225px; }
.max { width: 227px; height: 62px; color: #444; border: 1px solid #aaa; border-width: 1px 2px 2px 1px; }
.scale { display: flex; justify-content: space-between; padding: 0 14px; margin-top: 14px; }
.scale i { width: 2px; height: 5px; background: #aaa; }
input[type=range] { -webkit-appearance: none; appearance: none; display: block; width: 100%; height: 34px; margin: 4px 0 0; background: linear-gradient(#d4d4d4, #d4d4d4) 0 21px / 100% 6px no-repeat; }
input[type=range]::-webkit-slider-thumb { -webkit-appearance: none; width: 30px; height: 34px; background: #fff; border-radius: 4px; clip-path: polygon(50% 0, 100% 45%, 100% 100%, 0 100%, 0 45%); }
.dock-tabs { display: flex; gap: 24px; margin: 24px 0 2px 197px; height: 39px; }
.dock-tabs .on { width: 153px; background: #fdfdfd; border: 2px solid #aaa; border-top: 0; font-weight: 500; }

/* right tool strip */
.tools { width: 76px; display: flex; flex-direction: column; padding: 6px 4px 0 1px; }
.grip { width: 52px; height: 4px; margin: 0 0 8px 8px; background: repeating-linear-gradient(90deg, #000 0 4px, transparent 4px 8px); }
.tools button { height: 60px; gap: 11px; }
.tools .drop { padding-left: 11px; justify-content: flex-start; }
.tools .drop i { width: 12px; height: 7px; background: #757575; clip-path: polygon(0 0, 100% 0, 50% 100%); }
.tools .drop:disabled i { background: #bbb; }
.tools hr { width: 100%; height: 4px; margin: 8px 0; border: 0; border-top: 2px solid #bbb; background: #fff; }

/* status bar */
.status { height: 51px; display: flex; align-items: center; justify-content: flex-end; padding-right: 16px; background: #f4f4f4; }
.status strong { font-weight: 700; }
.status svg { margin-left: 24px; }
.status .licence { margin-left: 47px; font-weight: 500; }
.status .licence + svg { margin: 0 16px 0 17px; }
```
FILE: spectrum.js
```js
// Builds the 1H trace and its ppm axis in plot units (1296 x 903).
const LEFT = 450, TOP = 484, ZERO = 1056, PPM = 66.1;

const base = [[450, 1271], [770, 1271], [1140, 1263], [1473, 1261], [1602, 1264], [1741, 1266], [1746, 1269]];
const broad = [[940, 273, 19], [1282, 5000, 1.87]];
// centre, half width, tail height, tail width
const tall = [[998, 3, 26, 5], [1029.5, 3.5, 30, 5], [1061.5, 2.5, 20, 4], [1076.5, 3.5, 30, 5], [1341, 2.5, 50, 6]];
const small = [[980, 16, 1], [1011, 12, 1], [1014, 10, 1], [1044, 22, 1], [1047, 14, 1], [1094, 18, 1.2],
  [1325, 32, .8], [1356, 34, .8], [1373, 5, 2], [1424.5, 43, 1.4], [1450, 6, 2], [1506, 181, .5]];

let seed = 7;
const random = () => (seed = (seed * 16807) % 2147483647) / 2147483647;

function baseline(x) {
  for (let i = 1; i < base.length; i++) {
    const [x0, y0] = base[i - 1], [x1, y1] = base[i];
    if (x <= x1) return y0 + (y1 - y0) * (x - x0) / (x1 - x0);
  }
  return base[base.length - 1][1];
}
const lorentz = (x, c, h, w) => h / (1 + ((x - c) / w) ** 2);

let d = "";
for (let x = LEFT; x <= 1746; x += 0.25) {
  let h = 0;
  for (const [c, a, w] of broad) h += lorentz(x, c, a, w);
  for (const [c, , a, w] of tall) h += lorentz(x, c, a, w);
  for (const [c, a, w] of small) h += lorentz(x, c, a, w);
  for (const [c, half] of tall) if (Math.abs(x - c) < half) h = 2000;
  const noise = (random() - 0.5) * (h > 60 ? 1 : 5) * (random() > 0.97 ? 1.6 : 1);
  d += (d ? "L" : "M") + (x - LEFT) + " " + (baseline(x) - h + noise - TOP).toFixed(1);
}
document.getElementById("trace").setAttribute("d", d);

let marks = "", labels = "";
for (let p = 15.5; p >= -3.5; p -= 0.5) {
  const x = Math.round(ZERO - p * PPM), whole = Number.isInteger(p);
  marks += `M${x} 859v${whole ? 7 : 4}`;
  if (whole) labels += `<text x="${x}" y="881">${p}</text>`;
}
document.getElementById("ticks").innerHTML = `<path d="${marks}"/>` + labels;
```
